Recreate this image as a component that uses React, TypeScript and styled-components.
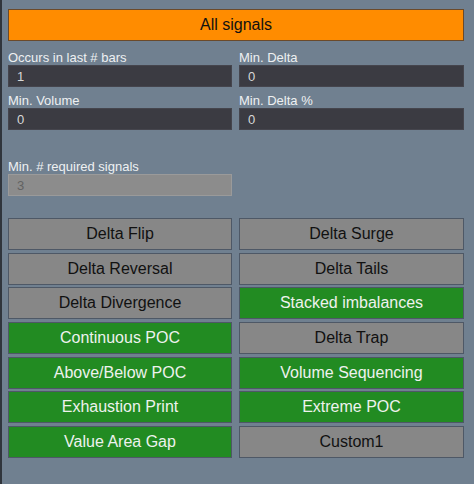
import React from 'react';
import styled, { createGlobalStyle } from 'styled-components';

const GlobalStyle = createGlobalStyle`
  html, body {
    margin: 0;
    padding: 0;
    background: #708090;
  }
  body {
    font-family: "Liberation Sans", Arial, sans-serif;
  }
`;

const Panel = styled.div`
  box-sizing: border-box;
  height: 484px;
  border-left: 2px solid #30353c;
  padding: 9px 10px 0 6px;
  background: #708090;
`;

const Header = styled.div`
  box-sizing: border-box;
  height: 32px;
  background: #ff8c00;
  border: 1px solid #6b4a2a;
  color: #111;
  font-size: 16px;
  display: flex;
  align-items: center;
  justify-content: center;
  margin-bottom: 3px;
`;

const FieldGrid = styled.div`
  display: grid;
  grid-template-columns: 224px 1fr;
  column-gap: 7px;
`;

const Field = styled.div`
  display: flex;
  flex-direction: column;
`;

const Label = styled.label`
  color: #eef0f2;
  font-size: 13px;
  line-height: 15px;
  padding-top: 6px;
  height: 15px;
`;

const Input = styled.input<{ $muted?: boolean }>`
  box-sizing: border-box;
  height: 22px;
  width: 100%;
  margin: 0;
  border: 1px solid ${(p) => (p.$muted ? '#9a9a9a' : '#45454d')};
  background: ${(p) => (p.$muted ? '#8c8c8c' : '#3b3b42')};
  color: ${(p) => (p.$muted ? '#626262' : '#d8d8d8')};
  font-family: "Liberation Sans", Arial, sans-serif;
  font-size: 13px;
  padding: 0 8px;
  outline: none;
`;

const Spacer = styled.div<{ $h: number }>`
  height: ${(p) => p.$h}px;
`;

const SignalGrid = styled.div`
  display: grid;
  grid-template-columns: 224px 1fr;
  column-gap: 7px;
  row-gap: 2.67px;
`;

const SignalButton = styled.button<{ $on: boolean }>`
  box-sizing: border-box;
  height: 32px;
  margin: 0;
  border: 1px solid #4e5866;
  background: ${(p) => (p.$on ? '#228b22' : '#878787')};
  color: ${(p) => (p.$on ? '#eef2ee' : '#111')};
  font-family: "Liberation Sans", Arial, sans-serif;
  font-size: 16px;
  cursor: pointer;
`;

const signals: [string, boolean][] = [
  ['Delta Flip', false],
  ['Delta Surge', false],
  ['Delta Reversal', false],
  ['Delta Tails', false],
  ['Delta Divergence', false],
  ['Stacked imbalances', true],
  ['Continuous POC', true],
  ['Delta Trap', false],
  ['Above/Below POC', true],
  ['Volume Sequencing', true],
  ['Exhaustion Print', true],
  ['Extreme POC', true],
  ['Value Area Gap', true],
  ['Custom1', false],
];

export default function App() {
  return (
    <>
      <GlobalStyle />
      <Panel>
        <Header>All signals</Header>
        <FieldGrid>
          <Field>
            <Label>Occurs in last # bars</Label>
            <Input defaultValue="1" />
          </Field>
          <Field>
            <Label>Min. Delta</Label>
            <Input defaultValue="0" />
          </Field>
          <Field>
            <Label>Min. Volume</Label>
            <Input defaultValue="0" />
          </Field>
          <Field>
            <Label>Min. Delta %</Label>
            <Input defaultValue="0" />
          </Field>
        </FieldGrid>
        <Spacer $h={23} />
        <FieldGrid>
          <Field>
            <Label>Min. # required signals</Label>
            <Input $muted readOnly defaultValue="3" />
          </Field>
        </FieldGrid>
        <Spacer $h={22} />
        <SignalGrid>
          {signals.map(([name, on]) => (
            <SignalButton key={name} $on={on}>
              {name}
            </SignalButton>
          ))}
        </SignalGrid>
      </Panel>
    </>
  );
}
